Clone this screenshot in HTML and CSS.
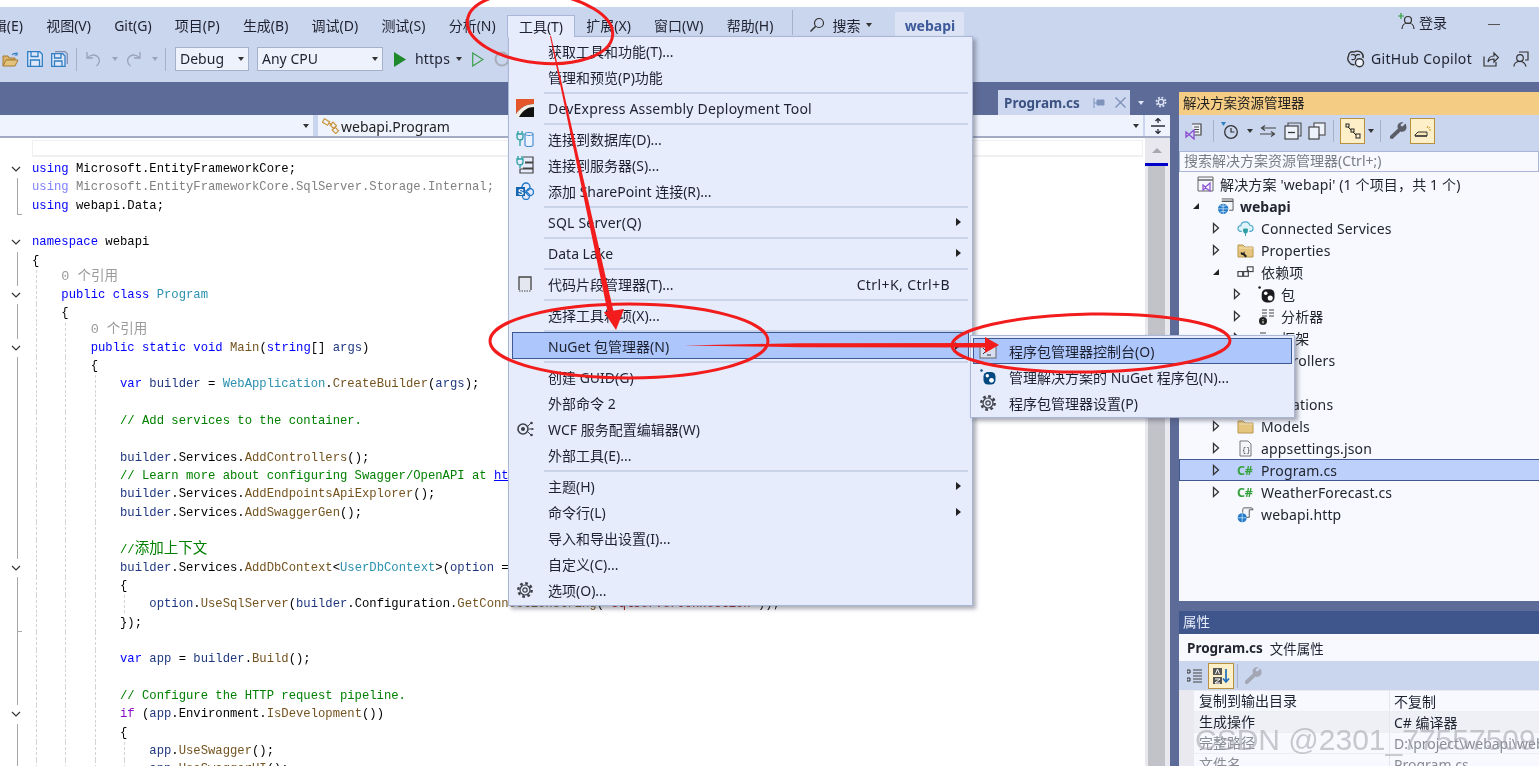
FILE: index.html
```html
<!DOCTYPE html>
<html lang="zh">
<head>
<meta charset="utf-8">
<title>webapi - Visual Studio</title>
<link rel="stylesheet" href="styles.css">
</head>
<body>
<svg class="defs" width="0" height="0">
  <defs>
    <symbol id="chev" viewBox="0 0 10 6"><path d="M1 1l4 4 4-4" fill="none" stroke="#333" stroke-width="1.2"/></symbol>
    <symbol id="gear" viewBox="0 0 16 16">
      <circle cx="8" cy="8" r="6.7" fill="none" stroke="#3c3f47" stroke-width="2.4" stroke-dasharray="2.7 2.56"/>
      <circle cx="8" cy="8" r="5" fill="#e6ecfb" stroke="#3c3f47" stroke-width="1.2"/>
      <circle cx="8" cy="8" r="2.2" fill="none" stroke="#3c3f47" stroke-width="1.2"/>
    </symbol>
    <symbol id="nuget" viewBox="0 0 16 16">
      <circle cx="1.5" cy="1.5" r="1.2" fill="#004880"/>
      <rect x="3.5" y="3" width="12" height="12.5" rx="4.5" fill="#004880"/>
      <circle cx="7.3" cy="6.8" r="1.7" fill="#fff"/>
      <circle cx="11.5" cy="11.3" r="2.4" fill="#fff"/>
    </symbol>
    <symbol id="nuget-dark" viewBox="0 0 16 16">
      <circle cx="1.5" cy="1.5" r="1.2" fill="#1b1b1f"/>
      <rect x="3.5" y="3" width="12" height="12.5" rx="4.5" fill="#1b1b1f"/>
      <circle cx="7.3" cy="6.8" r="1.7" fill="#fff"/>
      <circle cx="11.5" cy="11.3" r="2.4" fill="#fff"/>
    </symbol>
    <symbol id="folder" viewBox="0 0 17 15"><path d="M1 2h5l2 2h8v10H1z" fill="#e6c67f" stroke="#b8964f"/><path d="M2 5h14" stroke="#f3e2b8"/></symbol>
    <symbol id="caret-tri" viewBox="0 0 8 12"><path d="M1.500 1.500l5 4.500-5 4.500z" fill="none" stroke="#333" stroke-width="1.300"/></symbol>
    <symbol id="caret-open" viewBox="0 0 8 8"><path d="M7 1v6H1z" fill="#222"/></symbol>
  </defs>
</svg>

<div class="app">
  <div class="strip"></div>

  <header class="chrome">
    <nav class="menubar">
      <span class="mb mb-first">编辑(E)</span>
      <span class="mb">视图(V)</span>
      <span class="mb">Git(G)</span>
      <span class="mb">项目(P)</span>
      <span class="mb">生成(B)</span>
      <span class="mb">调试(D)</span>
      <span class="mb">测试(S)</span>
      <span class="mb">分析(N)</span>
      <span class="mb mb-open">工具(T)</span>
      <span class="mb">扩展(X)</span>
      <span class="mb">窗口(W)</span>
      <span class="mb">帮助(H)</span>
      <span class="mb-sep"></span>
      <svg class="mb-search" viewBox="0 0 16 16"><circle cx="10" cy="6" r="4.500" fill="none" stroke="#333" stroke-width="1.200"/><path d="M6.700 9.300L1.500 14.500" stroke="#333" stroke-width="1.500"/></svg>
      <span class="mb-searchtext">搜索</span>
      <span class="caret mb-caret"></span>
      <span class="mb-solution">webapi</span>
      <span class="mb-right">
        <svg class="login-ic" viewBox="0 0 17 17"><path d="M3 0v6M0 3h6" stroke="#2e9e3c" stroke-width="1.200"/><circle cx="10" cy="7" r="3.500" fill="none" stroke="#333" stroke-width="1.200"/><path d="M4 16c0-4 3-6 6-6s6 2 6 6" fill="none" stroke="#333" stroke-width="1.200"/></svg>
        <span class="login-t">登录</span>
        <span class="minimize"></span>
      </span>
    </nav>
    <div class="toolbar">
      <svg class="ti ti-open" viewBox="0 0 17 15"><path d="M1 4h5l1 2h6v2H5l-4 6z" fill="#dcb56c" stroke="#a67c33"/><path d="M4 8h12l-3 6H1z" fill="#e3c27c" stroke="#a67c33"/><path d="M10 3c1-1.500 3-2 5-1.500M15 .5v2.500h-2.500" fill="none" stroke="#2f7ec4" stroke-width="1.200"/></svg>
      <svg class="ti ti-save" viewBox="0 0 16 16"><path d="M.7.700h12l2.600 2.600v12H.7z" fill="#dfe8fa" stroke="#2f7ec4" stroke-width="1.300"/><path d="M4 1v4.500h7V1M3.500 15V9h9v6" fill="none" stroke="#2f7ec4" stroke-width="1.300"/></svg>
      <svg class="ti ti-saveall" viewBox="0 0 17 16"><path d="M4 .7h10l2.300 2.300v10" fill="none" stroke="#7c8bb0" stroke-width="1.200"/><path d="M.7 2.700h11l2.300 2.300v10.300H.7z" fill="#dfe8fa" stroke="#2f7ec4" stroke-width="1.300"/><path d="M3.500 3v4h6.500V3M3.500 15v-5h7.500v5" fill="none" stroke="#2f7ec4" stroke-width="1.300"/></svg>
      <span class="tsep ts-1"></span>
      <svg class="ti ti-undo" viewBox="0 0 15 16"><path d="M1 1v6h6" fill="none" stroke="#9aa3b8" stroke-width="1.300"/><path d="M1.500 7C4 3.500 9 3 12 6c2.500 2.800 1.500 6.500-1.500 9" fill="none" stroke="#9aa3b8" stroke-width="1.300"/></svg>
      <span class="caret caret-off ca-1"></span>
      <svg class="ti ti-redo" viewBox="0 0 15 16"><path d="M14 1v6H8" fill="none" stroke="#9aa3b8" stroke-width="1.300"/><path d="M13.500 7C11 3.500 6 3 3 6 .5 8.800 1.500 12.500 4.500 15" fill="none" stroke="#9aa3b8" stroke-width="1.300"/></svg>
      <span class="caret caret-off ca-2"></span>
      <span class="tsep ts-2"></span>
      <span class="combo combo-debug"><span>Debug</span><i class="caret"></i></span>
      <span class="combo combo-cpu"><span>Any CPU</span><i class="caret"></i></span>
      <svg class="ti ti-play" viewBox="0 0 12 15"><path d="M0 0l12 7.500L0 15z" fill="#1e8a2c"/></svg>
      <span class="https">https</span>
      <span class="caret ca-3"></span>
      <svg class="ti ti-play2" viewBox="0 0 12 15"><path d="M.7 1l10.300 6.500L.7 14z" fill="none" stroke="#3aa04a" stroke-width="1.200"/></svg>
      <svg class="ti ti-circle" viewBox="0 0 16 16"><circle cx="8" cy="8" r="6.500" fill="none" stroke="#a8adba" stroke-width="2"/></svg>
      <span class="tb-right">
        <svg class="ti ti-copilot" viewBox="0 0 18 18"><path d="M7 2.200C4 1 1.500 3 1.500 6c-1 2-.5 5 1 6.500 1 1.800 3 2.500 5 2" fill="none" stroke="#333" stroke-width="1.400"/><path d="M7 2.200c2-1.500 5.500-1.500 7.500.5 1.500 1.500 2 3.500 1.500 5.500" fill="none" stroke="#333" stroke-width="1.400"/><path d="M4 5c2-1 4-.5 4.500 1.500.5 2-1 3.500-4 3M8.500 6c1-1.500 3-2 4.500-1" fill="none" stroke="#333" stroke-width="1.200"/><circle cx="12.500" cy="12.800" r="4" fill="#eef2fb" stroke="#333" stroke-width="1.400"/></svg>
        <span class="copilot">GitHub Copilot</span>
        <svg class="ti ti-share" viewBox="0 0 16 16"><path d="M1 5.500v9.500h12v-4" fill="none" stroke="#333" stroke-width="1.200"/><path d="M5 11c0-4 3-6 6-6V2l4.500 4.500L11 11V8c-3 0-5 1-6 3z" fill="none" stroke="#333" stroke-width="1.200"/></svg>
        <svg class="ti ti-feedback" viewBox="0 0 16 16"><path d="M6 1h9v8h-3" fill="none" stroke="#333" stroke-width="1.200"/><circle cx="7" cy="7" r="3.300" fill="none" stroke="#333" stroke-width="1.200"/><path d="M1 15.500c0-3.500 3-5 6-5s5 1.500 6 5" fill="none" stroke="#333" stroke-width="1.200"/></svg>
      </span>
    </div>
  </header>

  <div class="workspace">
    <section class="editor">
      <div class="tabstrip">
        <div class="tab">
          <span class="tab-name">Program.cs</span>
          <svg class="tab-pin" viewBox="0 0 12 10"><path d="M1 0v10M1 5h3M4 2h7v5H4z" fill="#7f93bb" stroke="#7f93bb"/></svg>
          <svg class="tab-x" viewBox="0 0 11 11"><path d="M.5.500l10 10M10.500.500l-10 10" stroke="#7b8fb8" stroke-width="1.300"/></svg>
        </div>
        <span class="caret caret-light strip-caret"></span>
        <svg class="strip-gear" viewBox="0 0 16 16"><circle cx="8" cy="8" r="6" fill="none" stroke="#dfe6f7" stroke-width="2.400" stroke-dasharray="2.400 2.300"/><circle cx="8" cy="8" r="3.600" fill="none" stroke="#dfe6f7" stroke-width="1.800"/></svg>
      </div>
      <div class="navbar">
        <div class="nav-drop nav-left"><i class="caret"></i></div>
        <div class="nav-drop nav-right">
          <svg class="nav-ic" viewBox="0 0 18 16"><g fill="none" stroke="#c8963c" stroke-width="1.200"><rect x="1" y="2" width="6" height="4" transform="rotate(30 4 4)"/><rect x="9" y="5" width="5" height="4" transform="rotate(45 11 7)"/><rect x="11" y="10" width="5" height="4" transform="rotate(45 13 12)"/><path d="M7 5l3 2M12 9v2"/></g></svg>
          <span class="nav-text">webapi.Program</span>
          <i class="caret"></i>
        </div>
        <div class="nav-split"><svg viewBox="0 0 14 16"><path d="M0 8h14M7 0v5M7 11v5M4.500 3L7 .5 9.500 3M4.500 13L7 15.500 9.500 13" fill="none" stroke="#2c2f38" stroke-width="1.300"/></svg></div>
      </div>
      <div class="editor-body">
        <div class="code">
          <div class="sticky"></div>

          <div class="ln"><span class="gut fold"><svg><use href="#chev"/></svg></span><span class="k">using</span>&nbsp;<span>Microsoft.EntityFrameworkCore;</span></div>
          <div class="ln faded"><span class="gut line"></span><span class="k">using</span>&nbsp;<span>Microsoft.EntityFrameworkCore.SqlServer.Storage.Internal;</span></div>
          <div class="ln"><span class="gut end"></span><span class="k">using</span>&nbsp;<span>webapi.Data;</span></div>
          <div class="ln"><span class="gut"></span></div>
          <div class="ln"><span class="gut fold"><svg><use href="#chev"/></svg></span><span class="k">namespace</span>&nbsp;<span>webapi</span></div>
          <div class="ln"><span class="gut line"></span><span>{</span></div>
          <div class="ln lens"><span class="gut line"></span><i class="ind"></i><span class="lens-t">0 个引用</span></div>
          <div class="ln"><span class="gut fold"><svg><use href="#chev"/></svg></span><i class="ind"></i><span class="k">public</span>&nbsp;<span class="k">class</span>&nbsp;<span class="t">Program</span></div>
          <div class="ln"><span class="gut line"></span><i class="ind"></i><span>{</span></div>
          <div class="ln lens"><span class="gut line"></span><i class="ind"></i><i class="ind"></i><span class="lens-t">0 个引用</span></div>
          <div class="ln"><span class="gut fold"><svg><use href="#chev"/></svg></span><i class="ind"></i><i class="ind"></i><span class="k">public</span>&nbsp;<span class="k">static</span>&nbsp;<span class="k">void</span>&nbsp;<span class="m">Main</span><span>(</span><span class="k">string</span><span>[]</span>&nbsp;<span class="v">args</span><span>)</span></div>
          <div class="ln"><span class="gut line"></span><i class="ind"></i><i class="ind"></i><span>{</span></div>
          <div class="ln"><span class="gut line"></span><i class="ind"></i><i class="ind"></i><i class="ind"></i><span class="k">var</span>&nbsp;<span class="v">builder</span>&nbsp;<span>=</span>&nbsp;<span class="t">WebApplication</span><span>.</span><span class="m">CreateBuilder</span><span>(</span><span class="v">args</span><span>);</span></div>
          <div class="ln"><span class="gut line"></span><i class="ind"></i><i class="ind"></i><i class="ind"></i></div>
          <div class="ln"><span class="gut line"></span><i class="ind"></i><i class="ind"></i><i class="ind"></i><span class="g">// Add services to the container.</span></div>
          <div class="ln"><span class="gut line"></span><i class="ind"></i><i class="ind"></i><i class="ind"></i></div>
          <div class="ln"><span class="gut line"></span><i class="ind"></i><i class="ind"></i><i class="ind"></i><span class="v">builder</span><span>.Services.</span><span class="m">AddControllers</span><span>();</span></div>
          <div class="ln"><span class="gut line"></span><i class="ind"></i><i class="ind"></i><i class="ind"></i><span class="g">// Learn more about configuring Swagger/OpenAPI at&nbsp;</span><span class="lnk">https://aka.ms/aspnetcore/swashbuckle</span></div>
          <div class="ln"><span class="gut line"></span><i class="ind"></i><i class="ind"></i><i class="ind"></i><span class="v">builder</span><span>.Services.</span><span class="m">AddEndpointsApiExplorer</span><span>();</span></div>
          <div class="ln"><span class="gut line"></span><i class="ind"></i><i class="ind"></i><i class="ind"></i><span class="v">builder</span><span>.Services.</span><span class="m">AddSwaggerGen</span><span>();</span></div>
          <div class="ln"><span class="gut line"></span><i class="ind"></i><i class="ind"></i><i class="ind"></i></div>
          <div class="ln"><span class="gut line"></span><i class="ind"></i><i class="ind"></i><i class="ind"></i><span class="g g-cn">//<span class="cn">添加上下文</span></span></div>
          <div class="ln"><span class="gut fold"><svg><use href="#chev"/></svg></span><i class="ind"></i><i class="ind"></i><i class="ind"></i><span class="v">builder</span><span>.Services.</span><span class="m">AddDbContext</span><span>&lt;</span><span class="t">UserDbContext</span><span>&gt;(</span><span class="v">option</span>&nbsp;<span>=&gt;</span></div>
          <div class="ln"><span class="gut line"></span><i class="ind"></i><i class="ind"></i><i class="ind"></i><span>{</span></div>
          <div class="ln"><span class="gut line"></span><i class="ind"></i><i class="ind"></i><i class="ind"></i><i class="ind"></i><span class="v">option</span><span>.</span><span class="m">UseSqlServer</span><span>(</span><span class="v">builder</span><span>.Configuration.</span><span class="m">GetConnectionString</span><span>(</span><span class="s">"SqlServerConnection"</span><span>));</span></div>
          <div class="ln"><span class="gut tick"></span><i class="ind"></i><i class="ind"></i><i class="ind"></i><span>});</span></div>
          <div class="ln"><span class="gut line"></span><i class="ind"></i><i class="ind"></i><i class="ind"></i></div>
          <div class="ln"><span class="gut line"></span><i class="ind"></i><i class="ind"></i><i class="ind"></i><span class="k">var</span>&nbsp;<span class="v">app</span>&nbsp;<span>=</span>&nbsp;<span class="v">builder</span><span>.</span><span class="m">Build</span><span>();</span></div>
          <div class="ln"><span class="gut line"></span><i class="ind"></i><i class="ind"></i><i class="ind"></i></div>
          <div class="ln"><span class="gut line"></span><i class="ind"></i><i class="ind"></i><i class="ind"></i><span class="g">// Configure the HTTP request pipeline.</span></div>
          <div class="ln"><span class="gut fold"><svg><use href="#chev"/></svg></span><i class="ind"></i><i class="ind"></i><i class="ind"></i><span class="p">if</span>&nbsp;<span>(</span><span class="v">app</span><span>.Environment.</span><span class="m">IsDevelopment</span><span>())</span></div>
          <div class="ln"><span class="gut line"></span><i class="ind"></i><i class="ind"></i><i class="ind"></i><span>{</span></div>
          <div class="ln"><span class="gut line"></span><i class="ind"></i><i class="ind"></i><i class="ind"></i><i class="ind"></i><span class="v">app</span><span>.</span><span class="m">UseSwagger</span><span>();</span></div>
          <div class="ln"><span class="gut line"></span><i class="ind"></i><i class="ind"></i><i class="ind"></i><i class="ind"></i><span class="v">app</span><span>.</span><span class="m">UseSwaggerUI</span><span>();</span></div>
        </div>
        <div class="vscroll">
          <div class="vs-top"><i></i></div>
          <div class="vs-mark"></div>
          <div class="vs-thumb"></div>
        </div>
      </div>
    </section>

    <aside class="side">
      <div class="se-title">解决方案资源管理器</div>
      <div class="se-tools">
        <svg class="si si-sync" viewBox="0 0 18 18"><path d="M7 2h9v11H9" fill="#eef2fb" stroke="#444" stroke-width="1.200"/><path d="M9 5h5M9 7.500h5M9 10h5" stroke="#444"/><path d="M1 10l3 2.500L9 8v9l-5-4.500L1 15z" fill="none" stroke="#8a4fd0" stroke-width="1.300"/></svg>
        <span class="se-sep sp-1"></span>
        <svg class="si si-hist" viewBox="0 0 18 18"><path d="M0 0h5L2.500 4z" fill="#2f7ec4"/><circle cx="10" cy="10" r="6.300" fill="none" stroke="#333" stroke-width="1.300"/><path d="M10 6v4h3.500" fill="none" stroke="#333" stroke-width="1.200"/></svg>
        <span class="caret ca-4"></span>
        <svg class="si si-arrows" viewBox="0 0 16 12"><path d="M16 3H2M5 .5L1.500 3 5 5.500" fill="none" stroke="#444" stroke-width="1.200"/><path d="M0 9h14M11 6.500L14.500 9 11 11.500" fill="none" stroke="#444" stroke-width="1.200"/></svg>
        <svg class="si si-collapse" viewBox="0 0 18 18"><path d="M4 4V1h13v13h-3" fill="none" stroke="#555" stroke-width="1.200"/><rect x="1" y="4" width="13" height="13" fill="#eef2fb" stroke="#444" stroke-width="1.200"/><path d="M4 10.500h7" stroke="#333" stroke-width="1.300"/></svg>
        <svg class="si si-copies" viewBox="0 0 18 18"><rect x="6" y="1" width="11" height="12" fill="#eef2fb" stroke="#555" stroke-width="1.200"/><rect x="1" y="5" width="10" height="12" fill="#eef2fb" stroke="#444" stroke-width="1.200"/></svg>
        <span class="se-sep sp-2"></span>
        <span class="se-on on-1"><svg viewBox="0 0 16 16"><rect x="1" y="1" width="3" height="3" fill="none" stroke="#222"/><rect x="6" y="6" width="3" height="3" fill="none" stroke="#222"/><rect x="11" y="11" width="4" height="4" fill="none" stroke="#222"/><path d="M3 4l3 3M8 9l3 3" stroke="#222"/></svg></span>
        <span class="caret ca-5"></span>
        <span class="se-sep sp-3"></span>
        <svg class="si si-wrench" viewBox="0 0 18 18"><path d="M16.500 1.500l-3 3-1.500-.5-.5-1.500 3-2c-3-1-6 1-6 4 0 1 .3 1.500.5 2L1 14v2.500L3.500 17l8-7.500c3 1 6-1 6-4 0-1.500-.5-3-1-4z" fill="#5a5d66"/></svg>
        <span class="se-on on-2"><svg viewBox="0 0 18 12"><path d="M1 11h12V7H4L1 10z" fill="#f7e7b4" stroke="#333"/><path d="M1 11h12" stroke="#333" stroke-width="1.300"/><path d="M14 1l-1 2M17 5h-2M16 2l-1.500 1.500" stroke="#c9952f"/></svg></span>
      </div>
      <div class="se-search">搜索解决方案资源管理器(Ctrl+;)</div>
      <div class="tree">
        <div class="tr lv-s"><svg class="ic" viewBox="0 0 17 17"><path d="M1 1h15v14H1z" fill="#f3f5fb" stroke="#666"/><path d="M1 4h15" stroke="#666" stroke-width="1.500"/><path d="M6 9l2.500 2L13 7v8l-4.500-3-2.500 2z" fill="none" stroke="#8a4fd0" stroke-width="1.200"/></svg><span class="tx">解决方案 'webapi' (1 个项目，共 1 个)</span></div>
        <div class="tr lv-0"><svg class="exp"><use href="#caret-open"/></svg><svg class="ic" viewBox="0 0 18 18"><path d="M5 1h12v12h-4" fill="#f3f5fb" stroke="#555"/><path d="M5 3.500h12" stroke="#555" stroke-width="1.500"/><circle cx="6.500" cy="11.500" r="5.500" fill="#1f78c8"/><path d="M1 11.500h11M6.500 6v11M3 8c2 1 5 1 7 0M3 15c2-1 5-1 7 0" fill="none" stroke="#d6e9fa" stroke-width=".8"/></svg><span class="tx bold">webapi</span></div>
        <div class="tr lv-1"><svg class="exp"><use href="#caret-tri"/></svg><svg class="ic" viewBox="0 0 18 18"><path d="M5 12H4a3 3 0 010-6c.5-3 3-4 5-4s4 1.500 4.500 3.500c2.500 0 3.500 1.500 3.500 3.500s-1.500 3-3 3h-1" fill="#dff3fa" stroke="#4aa6c9" stroke-width="1.200"/><path d="M7 9.500h4v2.500a2 2 0 01-4 0zM9 14v3" fill="#2e9ea3" stroke="#2e9ea3"/></svg><span class="tx">Connected Services</span></div>
        <div class="tr lv-1"><svg class="exp"><use href="#caret-tri"/></svg><svg class="ic" viewBox="0 0 17 15"><use href="#folder"/><path d="M8 8l-2 2-2-1c-1 2 .5 3.500 2 3l2.500 2.500 1.500-1.500-2.500-2.500c.5-1-.3-1.500 .5-2.500z" fill="#222"/></svg><span class="tx">Properties</span></div>
        <div class="tr lv-1"><svg class="exp"><use href="#caret-open"/></svg><svg class="ic" viewBox="0 0 18 14"><g fill="none" stroke="#444" stroke-width="1.200"><rect x="1" y="6" width="5" height="5"/><rect x="7" y="6" width="5" height="5"/><rect x="11" y="1" width="6" height="5"/><path d="M6 8.500h1M12 6V4"/></g></svg><span class="tx">依赖项</span></div>
        <div class="tr lv-2"><svg class="exp"><use href="#caret-tri"/></svg><svg class="ic"><use href="#nuget-dark"/></svg><span class="tx">包</span></div>
        <div class="tr lv-2"><svg class="exp"><use href="#caret-tri"/></svg><svg class="ic" viewBox="0 0 17 17"><path d="M4 2h5M4 5h5M4 8h5M11 2h5M11 5h5M11 8h5" stroke="#444" stroke-width="1.200"/><circle cx="5" cy="13" r="4" fill="#222"/><path d="M5 11v.8M5 12.800V15.500" stroke="#fff"/></svg><span class="tx">分析器</span></div>
        <div class="tr lv-2"><svg class="exp"><use href="#caret-tri"/></svg><svg class="ic" viewBox="0 0 17 17"><path d="M2 3h6M2 7h13M2 11h13" stroke="#444"/></svg><span class="tx">框架</span></div>
        <div class="tr lv-1"><svg class="exp"><use href="#caret-tri"/></svg><svg class="ic" viewBox="0 0 17 15"><use href="#folder"/></svg><span class="tx">Controllers</span></div>
        <div class="tr lv-1"><svg class="exp"><use href="#caret-tri"/></svg><svg class="ic" viewBox="0 0 17 15"><use href="#folder"/></svg><span class="tx">Data</span></div>
        <div class="tr lv-1"><svg class="exp"><use href="#caret-tri"/></svg><svg class="ic" viewBox="0 0 17 15"><use href="#folder"/></svg><span class="tx">Migrations</span></div>
        <div class="tr lv-1"><svg class="exp"><use href="#caret-tri"/></svg><svg class="ic" viewBox="0 0 17 15"><use href="#folder"/></svg><span class="tx">Models</span></div>
        <div class="tr lv-1"><svg class="exp"><use href="#caret-tri"/></svg><svg class="ic" viewBox="0 0 17 17"><path d="M3 1h8l3 3v12H3z" fill="#f3f5fb" stroke="#777"/><text x="5" y="12" class="js-text">{}</text></svg><span class="tx">appsettings.json</span></div>
        <div class="tr lv-1 tr-sel"><svg class="exp"><use href="#caret-tri"/></svg><span class="ic cs">C#</span><span class="tx">Program.cs</span></div>
        <div class="tr lv-1"><svg class="exp"><use href="#caret-tri"/></svg><span class="ic cs">C#</span><span class="tx">WeatherForecast.cs</span></div>
        <div class="tr lv-1"><span class="exp"></span><svg class="ic" viewBox="0 0 18 18"><path d="M7 2h8a2 2 0 012 2h-4v8H8" fill="#f3f5fb" stroke="#555"/><path d="M7 2c-1 1-1 3-1 5" fill="none" stroke="#555"/><circle cx="5.500" cy="12.500" r="4.800" fill="#1f78c8"/><path d="M1 12.500h9M5.500 8v9" stroke="#d6e9fa" stroke-width=".8"/></svg><span class="tx">webapi.http</span></div>
      </div>

      <div class="props">
        <div class="pr-title">属性</div>
        <div class="pr-head"><b>Program.cs</b><span>文件属性</span></div>
        <div class="pr-tools">
          <svg class="pr-ic" viewBox="0 0 16 16"><path d="M0 2h3v3H0zM0 10h3v3H0z" fill="none" stroke="#333"/><path d="M6 2h9M6 5h9M6 8h9M6 11h9M6 14h9" stroke="#444" stroke-width="1.200"/></svg>
          <span class="pr-on"><svg viewBox="0 0 18 18"><rect x="1" y="1" width="9" height="7" fill="#555"/><rect x="1" y="10" width="9" height="7" fill="#555"/><path d="M3.500 7l2-5 2 5M3 12h5l-5 4h5" fill="none" stroke="#fff"/><path d="M14 2v13M11 11.500l3 3.500 3-3.500" fill="none" stroke="#1f6fbf" stroke-width="1.700"/></svg></span>
          <span class="pr-sep"></span>
          <svg class="pr-ic pr-wrench" viewBox="0 0 18 18"><path d="M16.500 1.500l-3 3-1.500-.5-.5-1.500 3-2c-3-1-6 1-6 4 0 1 .3 1.500.5 2L1 14v2.500L3.500 17l8-7.500c3 1 6-1 6-4 0-1.500-.5-3-1-4z" fill="#a3a7b3"/></svg>
        </div>
        <div class="pr-grid">
          <div class="pr-row"><span class="pr-n">复制到输出目录</span><span class="pr-v">不复制</span></div>
          <div class="pr-row pr-cur"><span class="pr-n">生成操作</span><span class="pr-v">C# 编译器</span></div>
          <div class="pr-row pr-dim"><span class="pr-n">完整路径</span><span class="pr-v">D:\project\webapi\webapi\Program.cs</span></div>
          <div class="pr-row pr-dim"><span class="pr-n">文件名</span><span class="pr-v">Program.cs</span></div>
        </div>
      </div>
    </aside>
  </div>

  <!-- 工具 dropdown -->
  <div class="menu">
    <div class="mi"><span class="mi-ic"></span><span class="mi-t">获取工具和功能(T)...</span></div>
    <div class="mi"><span class="mi-ic"></span><span class="mi-t">管理和预览(P)功能</span></div>
    <div class="msep"></div>
    <div class="mi"><span class="mi-ic"><svg viewBox="0 0 18 18"><rect width="18" height="18" fill="#111"/><path d="M0 0h18v5C10 5 4 9 0 15z" fill="#e4552a"/><path d="M0 15C4 9 10 5 18 5v3C12 8 7 11 3 18H0z" fill="#f4efe6"/></svg></span><span class="mi-t la">DevExpress Assembly Deployment Tool</span></div>
    <div class="msep"></div>
    <div class="mi"><span class="mi-ic"><svg viewBox="0 0 18 18"><path d="M2 1v3M6 1v3M1 4h6v3a3 3 0 01-6 0zM4 10v6" fill="none" stroke="#2a9ea3" stroke-width="1.300"/><path d="M9 4c0-2 8-2 8 0v11c0 2-8 2-8 0z" fill="#eef4ff" stroke="#4a90d0" stroke-width="1.200"/><path d="M9 4c0 2 8 2 8 0" fill="none" stroke="#4a90d0"/></svg></span><span class="mi-t">连接到数据库(D)...</span></div>
    <div class="mi"><span class="mi-ic"><svg viewBox="0 0 18 18"><path d="M2 0v3M6 0v3M1 3h6v3a3 3 0 01-6 0zM4 9v3" fill="none" stroke="#2a9ea3" stroke-width="1.300"/><path d="M7 1h10v5H9M9 7h8v5H7M4 13h13v4H4z" fill="none" stroke="#444" stroke-width="1.200"/></svg></span><span class="mi-t">连接到服务器(S)...</span></div>
    <div class="mi"><span class="mi-ic"><svg viewBox="0 0 18 18"><circle cx="10" cy="5" r="4" fill="none" stroke="#1f78c8" stroke-width="1.300"/><circle cx="14" cy="10" r="3.500" fill="none" stroke="#1f78c8" stroke-width="1.300"/><circle cx="10" cy="14" r="3.500" fill="none" stroke="#1f78c8" stroke-width="1.300"/><rect x="0" y="5" width="9" height="9" fill="#1565b0"/><text x="2" y="12.500" class="sp-text">S</text></svg></span><span class="mi-t">添加 SharePoint 连接(R)...</span></div>
    <div class="msep"></div>
    <div class="mi"><span class="mi-ic"></span><span class="mi-t la">SQL Server(Q)</span><span class="arr"></span></div>
    <div class="msep"></div>
    <div class="mi"><span class="mi-ic"></span><span class="mi-t">Data Lake</span><span class="arr"></span></div>
    <div class="msep"></div>
    <div class="mi"><span class="mi-ic"><svg viewBox="0 0 18 18"><path d="M3 15V2h12v13" fill="#e4e7f0" stroke="#444" stroke-width="1.300"/><path d="M3 16h12" stroke="#444" stroke-dasharray="1.500 1"/></svg></span><span class="mi-t">代码片段管理器(T)...</span><span class="mi-k">Ctrl+K, Ctrl+B</span></div>
    <div class="msep"></div>
    <div class="mi"><span class="mi-ic"></span><span class="mi-t">选择工具箱项(X)...</span></div>
    <div class="msep"></div>
    <div class="mi mi-hot"><span class="mi-ic"></span><span class="mi-t">NuGet 包管理器(N)</span><span class="arr"></span></div>
    <div class="msep"></div>
    <div class="mi"><span class="mi-ic"></span><span class="mi-t">创建 GUID(G)</span></div>
    <div class="mi"><span class="mi-ic"></span><span class="mi-t">外部命令 2</span></div>
    <div class="mi"><span class="mi-ic"><svg viewBox="0 0 18 18"><circle cx="7" cy="9" r="5" fill="none" stroke="#3c3f47" stroke-width="1.600"/><circle cx="7" cy="9" r="2" fill="#3c3f47"/><path d="M12 6l3-3M13 9h3M12 12l3 3" stroke="#3c3f47"/><circle cx="15.500" cy="3" r="1.300" fill="#3c3f47"/><circle cx="16.500" cy="9" r="1.100" fill="#3c3f47"/><circle cx="15.500" cy="15" r="1.300" fill="#3c3f47"/></svg></span><span class="mi-t">WCF 服务配置编辑器(W)</span></div>
    <div class="mi"><span class="mi-ic"></span><span class="mi-t">外部工具(E)...</span></div>
    <div class="msep"></div>
    <div class="mi"><span class="mi-ic"></span><span class="mi-t">主题(H)</span><span class="arr"></span></div>
    <div class="mi"><span class="mi-ic"></span><span class="mi-t">命令行(L)</span><span class="arr"></span></div>
    <div class="mi"><span class="mi-ic"></span><span class="mi-t">导入和导出设置(I)...</span></div>
    <div class="mi"><span class="mi-ic"></span><span class="mi-t">自定义(C)...</span></div>
    <div class="mi"><span class="mi-ic"><svg class="gear"><use href="#gear"/></svg></span><span class="mi-t">选项(O)...</span></div>
  </div>

  <!-- NuGet submenu -->
  <div class="submenu">
    <div class="mi mi-hot"><span class="mi-ic"><svg viewBox="0 0 18 16"><rect x="1" y="1" width="16" height="14" fill="#d6deef" stroke="#666"/><path d="M4 5l3 3-3 3M8 12h4" fill="none" stroke="#333"/></svg></span><span class="mi-t">程序包管理器控制台(O)</span></div>
    <div class="mi"><span class="mi-ic"><svg class="nuget"><use href="#nuget"/></svg></span><span class="mi-t">管理解决方案的 NuGet 程序包(N)...</span></div>
    <div class="mi"><span class="mi-ic"><svg class="gear"><use href="#gear"/></svg></span><span class="mi-t">程序包管理器设置(P)</span></div>
  </div>

  <!-- hand-drawn red annotations -->
  <svg class="marks" viewBox="0 0 1539 766">
    <g fill="none" stroke="#f21c1c" stroke-width="3">
      <ellipse cx="540" cy="28" rx="73" ry="35" transform="rotate(6 540 28)"/>
      <ellipse cx="629" cy="341" rx="139" ry="37"/>
      <ellipse cx="1091" cy="343" rx="139" ry="29" transform="rotate(-1 1091 343)"/>
    </g>
    <path d="M550 36l1-.3 63 278h-6z" fill="#f21c1c"/>
    <path d="M604 312l20-3-8 21z" fill="#f21c1c"/>
    <path d="M684 345.500L800 343.200 988 343v4.500L800 347.200z" fill="#f21c1c"/>
    <path d="M985 337l14 8-14 8z" fill="#f21c1c"/>
  </svg>

  <div class="watermark">CSDN @2301_77557509</div>
</div>
</body>
</html>
```

FILE: styles.css
```css
* { box-sizing: border-box; }
html, body { margin: 0; padding: 0; }
body {
  background: #fff;
  font-family: "Noto Sans", "Noto Sans CJK SC", sans-serif;
  font-size: 14px;
  color: #1e2230;
}
.defs { position: absolute; }
.app {
  position: relative;
  width: 1539px;
  height: 766px;
  overflow: hidden;
  display: flex;
  flex-direction: column;
  filter: blur(.35px);
}
.strip { height: 7px; background: #fff; flex: none; }

/* chrome */
.chrome { background: #cad5ee; flex: none; }
.menubar { height: 29px; display: flex; align-items: flex-end; white-space: nowrap; }
.mb { height: 21px; line-height: 21px; padding: 0 11.600px; flex: none; }
.mb-first { margin-left: -32.800px; }
.mb-open {
  position: relative;
  z-index: 3;
  height: 22px;
  margin-bottom: -1px;
  background: #e6ecfb;
  border: 1px solid #aab6d6;
  border-bottom: 0;
  padding: 0 10.600px;
}
.mb-sep { width: 1px; height: 25px; background: #a5b0cd; margin: 0 0 1px 7.400px; align-self: flex-end; }
.mb-search { width: 16px; height: 16px; margin: 0 0 3px 16px; }
.mb-searchtext { height: 21px; line-height: 21px; margin-left: 7px; }
.mb-caret { margin: 0 0 9px 6px; }
.mb-solution {
  height: 24px;
  line-height: 27px;
  margin-left: 23px;
  width: 69px;
  text-align: center;
  background: #dce3f5;
  color: #3f5a9a;
  font-weight: 700;
}
.mb-right { margin-left: auto; display: flex; align-items: center; height: 29px; padding-right: 39px; }
.login-ic { width: 17px; height: 17px; }
.login-t { margin-left: 4px; }
.minimize { width: 12px; height: 1px; background: #555; margin: 5px 0 0 41px; }

.caret {
  display: inline-block;
  width: 0;
  height: 0;
  flex: none;
  border-left: 3.5px solid transparent;
  border-right: 3.5px solid transparent;
  border-top: 4px solid #333;
}
.caret-off { border-top-color: #9aa3b8; }
.caret-light { border-top-color: #dfe6f7; }

.toolbar { height: 46px; display: flex; align-items: center; padding-left: 2px; }
.ti { flex: none; display: block; }
.ti-open { width: 17px; height: 15px; }
.ti-save { width: 16px; height: 16px; margin-left: 8px; }
.ti-saveall { width: 17px; height: 16px; margin-left: 8px; }
.tsep { width: 1px; height: 23px; background: #a5b0cd; flex: none; }
.ts-1 { margin-left: 8px; }
.ti-undo { width: 15px; height: 16px; margin-left: 9px; }
.ca-1 { margin-left: 11px; }
.ti-redo { width: 15px; height: 16px; margin-left: 8px; }
.ca-2 { margin-left: 11px; }
.ts-2 { margin-left: 7px; }
.combo {
  height: 24px;
  background: #eef2fc;
  border: 1px solid #a5b0cd;
  padding-left: 4px;
  display: flex;
  justify-content: space-between;
  align-items: center;
  flex: none;
}
.combo span { line-height: 20px; margin-top: -1px; }
.combo .caret { margin-right: 4px; }
.combo-debug { width: 74px; margin-left: 9px; }
.combo-cpu { width: 126px; margin-left: 8px; }
.ti-play { width: 12px; height: 15px; margin-left: 11px; }
.https { margin-left: 9px; letter-spacing: .2px; margin-top: -2px; }
.ca-3 { margin-left: 6px; }
.ti-play2 { width: 12px; height: 15px; margin-left: 10px; }
.ti-circle { width: 16px; height: 16px; margin-left: 10px; }
.tb-right { margin-left: auto; display: flex; align-items: center; padding-right: 10px; }
.ti-copilot { width: 18px; height: 18px; }
.copilot { margin-left: 6px; letter-spacing: .3px; margin-top: -1px; }
.ti-share { width: 16px; height: 16px; margin-left: 11px; }
.ti-feedback { width: 16px; height: 16px; margin-left: 14px; }

/* workspace */
.workspace { flex: 1; min-height: 0; display: flex; background: #5c6b97; }
.editor { width: 1170px; flex: none; display: flex; flex-direction: column; }
.tabstrip { height: 33px; display: flex; align-items: flex-end; flex: none; }
.tab {
  margin-left: 998px;
  width: 132px;
  height: 25px;
  background: #cdd7ef;
  display: flex;
  align-items: center;
  padding-left: 6px;
}
.tab-name { font-weight: 700; font-size: 13.500px; color: #3c5382; width: 89px; }
.tab-pin { width: 12px; height: 10px; }
.tab-x { width: 11px; height: 11px; margin-left: 10px; }
.strip-caret { margin: 0 0 10px 8px; }
.strip-gear { width: 12px; height: 12px; margin: 0 0 7px 11px; }

.navbar { height: 23px; flex: none; display: flex; background: #cad5ee; border-bottom: 2px solid #a3aac4; }
.nav-drop { background: #eff3fe; display: flex; align-items: center; height: 21px; }
.nav-left { width: 313px; justify-content: flex-end; padding-right: 4px; }
.nav-right { width: 825px; margin-left: 5px; padding-left: 4px; }
.nav-ic { width: 18px; height: 16px; flex: none; }
.nav-text { margin: 1px 0 0 1px; color: #222; }
.nav-right .caret { margin-left: auto; margin-right: 4px; }
.nav-split { width: 25px; margin-left: 2px; background: #eff3fe; display: flex; align-items: center; justify-content: center; }
.nav-split svg { width: 14px; height: 16px; }

.editor-body { flex: 1; min-height: 0; display: flex; background: #fff; }
.code {
  width: 1145px;
  flex: none;
  overflow: hidden;
  font-family: "Liberation Mono", monospace;
  font-size: 12.220px;
  color: #000;
}
.sticky { height: 17px; margin: 2px 2px 3px 32px; background: #fff; border: 1px solid #f0f0f2; border-bottom-width: 2px; }
.ln { height: 18.330px; display: flex; align-items: center; white-space: nowrap; }
.lens { height: 16px; color: #9a9a9a; font-family: "Liberation Mono", "Noto Sans CJK SC", monospace; font-size: 13.500px; }
.lens-t { line-height: 16px; margin-top: -1px; }
.gut { width: 32px; align-self: stretch; flex: none; position: relative; display: flex; justify-content: center; align-items: center; }
.gut svg { width: 10px; height: 6px; }
.gut.line { background: linear-gradient(#a8a8a8, #a8a8a8) 16.500px 0 / 1px 100% no-repeat; }
.gut.end {
  background:
    linear-gradient(#a8a8a8, #a8a8a8) 16.500px 0 / 1px 100% no-repeat,
    linear-gradient(#a8a8a8, #a8a8a8) 16.500px 100% / 5px 1px no-repeat;
}
.gut.tick {
  background:
    linear-gradient(#a8a8a8, #a8a8a8) 16.500px 0 / 1px 100% no-repeat,
    linear-gradient(#a8a8a8, #a8a8a8) 16.500px 100% / 5px 1px no-repeat;
}
.ind {
  width: 29.330px;
  flex: none;
  align-self: stretch;
  background: repeating-linear-gradient(#d4d4d4 0 3px, transparent 3px 5px) 4px 0 / 1px 100% no-repeat;
}
.k { color: #0000ff; }
.p { color: #8f08c4; }
.t { color: #2b91af; }
.m { color: #74531f; }
.v { color: #1f377f; }
.g { color: #008000; }
.s { color: #a31515; }
.lnk { color: #0000ff; text-decoration: underline; }
.g-cn { margin-top: -3px; }
.cn { font-family: "Noto Sans CJK SC", sans-serif; font-size: 14.500px; line-height: 16px; }
.faded { color: #808080; }
.faded .k { color: #8080ff; }

.vscroll { width: 25px; flex: none; background: #e8e8ee; display: flex; flex-direction: column; }
.vs-top { height: 25px; flex: none; display: flex; justify-content: center; align-items: center; }
.vs-top i { width: 0; height: 0; border-left: 5px solid transparent; border-right: 5px solid transparent; border-bottom: 5px solid #a8a9b0; margin-right: 2px; }
.vs-mark { height: 3px; flex: none; background: #0000c8; margin-right: 2px; }
.vs-thumb { flex: 1; width: 17px; margin-left: 3px; background: #c2c3c9; }

/* side panels */
.side { width: 360px; margin: 10px 0 0 9px; flex: none; display: flex; flex-direction: column; }
.se-title { height: 23px; line-height: 22px; padding-left: 4px; flex: none; background: #f5cc84; color: #222; font-size: 13.500px; }
.se-tools { height: 36px; flex: none; background: #cad5ee; display: flex; align-items: center; padding: 0 0 5px 6px; }
.si { flex: none; display: block; }
.si-sync { width: 18px; height: 18px; }
.se-sep { width: 1px; height: 22px; background: #a5b0cd; flex: none; }
.sp-1 { margin-left: 10px; }
.si-hist { width: 18px; height: 18px; margin-left: 7px; }
.ca-4 { margin-left: 8px; }
.si-arrows { width: 16px; height: 12px; margin-left: 7px; }
.si-collapse { width: 18px; height: 18px; margin-left: 8px; }
.si-copies { width: 18px; height: 18px; margin-left: 6px; }
.sp-2 { margin-left: 7px; }
.se-on { width: 25px; height: 26px; background: #fdf0c8; border: 1px solid #b8913f; display: flex; align-items: center; justify-content: center; flex: none; }
.on-1 { margin-left: 6px; }
.on-1 svg { width: 16px; height: 16px; }
.ca-5 { margin-left: 3px; }
.sp-3 { margin-left: 6px; }
.si-wrench { width: 18px; height: 18px; margin-left: 8px; }
.on-2 { margin-left: 3px; }
.on-2 svg { width: 18px; height: 12px; }
.se-search {
  height: 21px;
  flex: none;
  line-height: 17px;
  background: #f7f9ff;
  border: 1px solid #aab6d6;
  padding-left: 4px;
  color: #7a7d86;
}
.tree { flex: 1; min-height: 0; background: #f7f9ff; padding-top: 1px; overflow: hidden; }
.tr { height: 22px; display: flex; align-items: center; white-space: nowrap; color: #23262e; }
.tx { letter-spacing: .15px; }
.lv-s { padding-left: 18px; }
.lv-s .ic { margin-right: 6px; }
.lv-0 { padding-left: 13px; }
.lv-0 .ic { margin-right: 6px; }
.lv-1 { padding-left: 33px; }
.lv-2 { padding-left: 54px; }
.lv-2 .ic { margin-right: 6px; }
.exp { width: 8px; height: 12px; margin-right: 17px; flex: none; }
.ic { width: 17px; height: 17px; margin-right: 7px; flex: none; }
.cs { font-weight: 700; color: #37a33f; font-size: 12.500px; line-height: 17px; letter-spacing: -.3px; }
.bold { font-weight: 700; letter-spacing: 0; }
.tr-sel { background: #bcd0fb; border-top: 1px solid #41598f; border-bottom: 1px solid #41598f; border-left: 1px solid #41598f; padding-left: 32px; }
.js-text { font-family: "Liberation Mono", monospace; font-size: 7px; fill: #444; }
.sp-text { font-family: "Liberation Sans", sans-serif; font-size: 9px; font-weight: 700; fill: #fff; }

.props { height: 155px; margin-top: 10px; flex: none; background: #f7f9ff; display: flex; flex-direction: column; overflow: hidden; }
.pr-title { height: 23px; flex: none; line-height: 22px; padding-left: 4px; background: #3f568c; color: #e7ecf9; font-size: 13.500px; }
.pr-head { height: 27px; flex: none; display: flex; align-items: center; padding-left: 8px; }
.pr-head b { font-weight: 700; font-size: 13.500px; color: #23262e; }
.pr-head span { margin-left: 7px; font-size: 13.500px; }
.pr-tools { height: 29px; flex: none; background: #cad5ee; display: flex; align-items: center; padding-left: 8px; }
.pr-ic { width: 16px; height: 16px; flex: none; }
.pr-on { width: 26px; height: 26px; margin-left: 5px; background: #fdf0c8; border: 1px solid #b8913f; display: flex; align-items: center; justify-content: center; }
.pr-on svg { width: 18px; height: 18px; }
.pr-sep { width: 1px; height: 24px; background: #a5b0cd; margin-left: 3px; }
.pr-wrench { width: 18px; height: 18px; margin-left: 6px; }
.pr-grid { flex: none; height: 90px; background: #e9e9ef; padding-left: 15px; padding-top: 1px; }
.pr-row { height: 21px; display: flex; align-items: center; background: #f7f9ff; white-space: nowrap; overflow: hidden; border-bottom: 1px solid #eceef3; font-size: 14px; }
.pr-n { width: 196px; padding-left: 5px; flex: none; border-right: 1px solid #e4e6ec; line-height: 20px; }
.pr-v { padding-left: 4px; }
.pr-cur { background: #eef0f5; }
.pr-dim { color: #8a8c94; }

/* dropdown menus */
.menu, .submenu {
  position: absolute;
  background: #e6ecfb;
  border: 1px solid #aab6d6;
  box-shadow: 3px 3px 4px rgba(70, 76, 95, .45);
}
.menu { left: 508px; top: 36px; width: 465px; height: 570px; padding: 1px 3px; z-index: 2; }
.submenu { left: 970px; top: 335px; width: 325px; height: 83px; padding: 3px 2px; z-index: 2; }
.mi { height: 26px; display: flex; align-items: center; white-space: nowrap; }
.mi-ic { width: 36px; flex: none; display: flex; justify-content: center; align-items: center; padding: 0 14px 0 3px; }
.mi-ic svg { width: 18px; height: 18px; flex: none; }
.mi-ic svg.gear { width: 16px; height: 16px; }
.mi-ic svg.nuget { width: 16px; height: 16px; }
.mi-k { margin-left: auto; margin-right: 19px; letter-spacing: .4px; }
.la { letter-spacing: .2px; }
.arr {
  width: 0;
  height: 0;
  margin-left: auto;
  margin-right: 8px;
  border-top: 4px solid transparent;
  border-bottom: 4px solid transparent;
  border-left: 5px solid #222;
}
.msep { height: 2px; margin: 1.500px 1px 1.500px 32px; background: #c9d3ea; }
.mi-hot { background: #adc6fb; border: 1px solid #3d5a94; margin-top: -1px; height: 27px; }
.mi-hot .mi-ic { width: 35px; }
.submenu .mi-ic { padding: 0 12px 0 5px; }
.submenu .mi { height: 26px; }

/* annotations */
.marks { position: absolute; left: 0; top: 0; width: 1539px; height: 766px; pointer-events: none; z-index: 4; }
.watermark {
  position: absolute;
  left: 1195px;
  top: 722px;
  z-index: 5;
  font-family: "Liberation Sans", sans-serif;
  font-size: 30px;
  line-height: 36px;
  white-space: nowrap;
  color: rgba(160, 160, 165, .55);
}
```
